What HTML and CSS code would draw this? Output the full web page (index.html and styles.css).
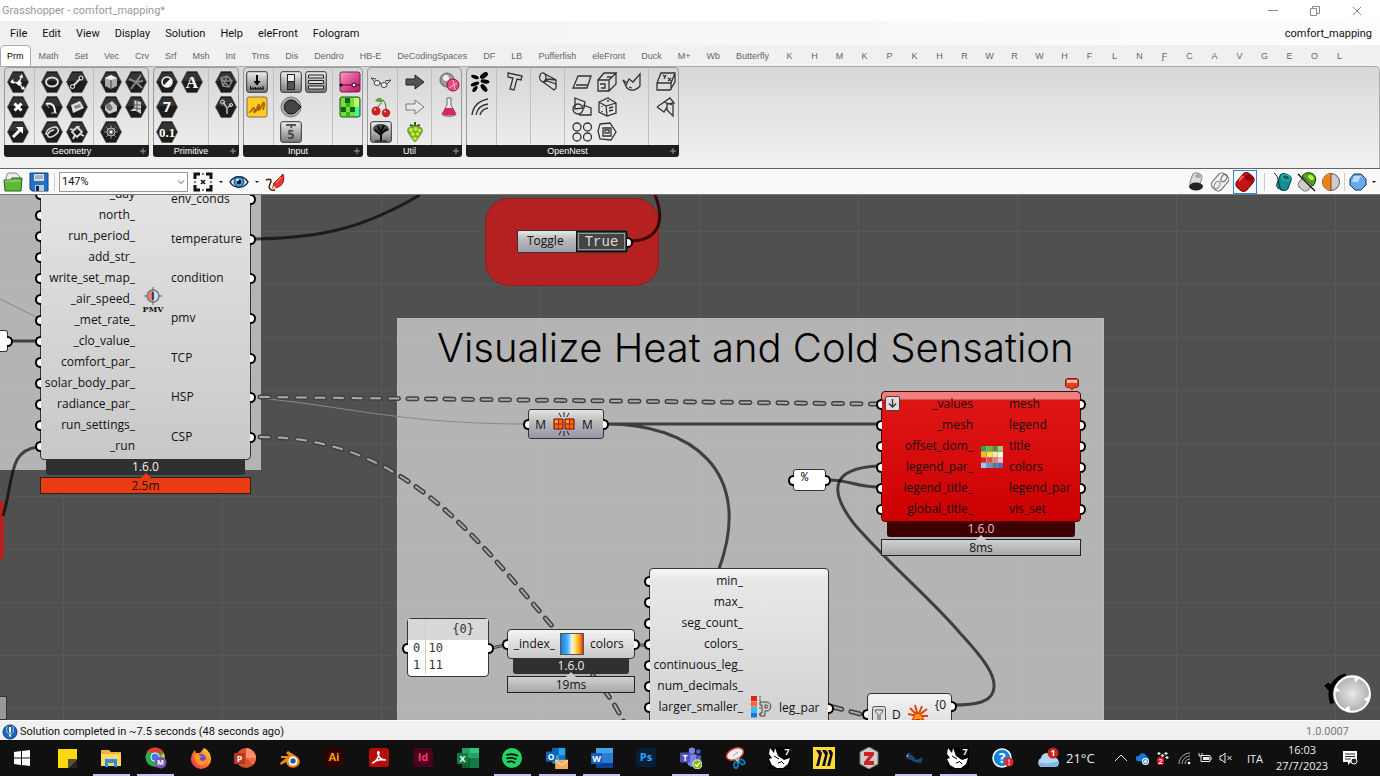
FILE: index.html
```html
<!DOCTYPE html>
<html lang="en">
<head>
  <meta charset="UTF-8">
  <title>Grasshopper - comfort_mapping*</title>
  <link rel="stylesheet" href="styles.css">
</head>
<body>

  <!-- shared shapes -->
  <svg class="defs" aria-hidden="true">
    <defs>
      <linearGradient id="steel" x1="0" y1="0" x2="0" y2="1"><stop offset="0" stop-color="#eee"/><stop offset="1" stop-color="#777"/></linearGradient>
      <linearGradient id="pink" x1="0" y1="0" x2="1" y2="1"><stop offset="0" stop-color="#ff9ac0"/><stop offset="1" stop-color="#c8006a"/></linearGradient>
      <linearGradient id="spectrum"><stop offset="0" stop-color="#1e78d8"/><stop offset=".3" stop-color="#3cb4f8"/><stop offset=".5" stop-color="#f4f4ee"/><stop offset=".68" stop-color="#ffd83c"/><stop offset=".85" stop-color="#ff8a1e"/><stop offset="1" stop-color="#d82414"/></linearGradient>
      <linearGradient id="fox" x1="1" y1="0" x2="0" y2="1"><stop offset="0" stop-color="#ffe226"/><stop offset=".5" stop-color="#ff7a28"/><stop offset="1" stop-color="#e8226a"/></linearGradient>
      <radialGradient id="knob"><stop offset="0" stop-color="#e8e8e8"/><stop offset="1" stop-color="#b0b0b0"/></radialGradient>
    </defs>
    <symbol id="hex" viewBox="0 0 22 22"><path d="M6 .5h10l5.500 10.500L16 21.500H6L.5 11z" fill="#1c1c1c" stroke="#555" stroke-width=".7"/><path d="M6.500 2h9l4.500 8H2z" fill="#444" opacity=".6"/></symbol>
    <symbol id="tile" viewBox="0 0 22 22"><rect x=".7" y=".7" width="20.600" height="20.600" rx="2" fill="url(#steel)" stroke="#333"/></symbol>
    <symbol id="plus" viewBox="0 0 8 8"><path d="M4 1v6M1 4h6" stroke="#999" fill="none"/></symbol>
    <symbol id="rhino" viewBox="0 0 22 22"><path d="M0 0h22v22H0z" fill="#000"/><path d="M1 1l4 5 1-5 3 8 6 4 6-2-2 6-5 4-6 0-5-3-3-6 3-1-3-4z" fill="#fff"/><path d="M5 9l5 3M12 14l3 3M9 16l3-1" stroke="#000"/></symbol>
  </svg>

  <div class="window">
    <header class="titlebar">
      <span>Grasshopper - comfort_mapping*</span>
      <div class="window-buttons">
        <button aria-label="Minimize"><svg width="10" height="10"><path d="M0 4.500h10" stroke="#888"/></svg></button>
        <button aria-label="Restore"><svg width="10" height="10"><path d="M.5 2.500h6v7h-6zM2.500 2.500v-2h7v7h-3" fill="none" stroke="#888"/></svg></button>
        <button aria-label="Close"><svg width="10" height="10"><path d="M1 1l8 8M9 1L1 9" stroke="#888"/></svg></button>
      </div>
    </header>

    <nav class="menu">
      <button>File</button><button>Edit</button><button>View</button><button>Display</button><button>Solution</button><button>Help</button><button>eleFront</button><button>Fologram</button>
      <span class="doc-name">comfort_mapping</span>
    </nav>

    <div class="tabs">
      <button class="active">Prm</button><button>Math</button><button>Set</button><button>Vec</button><button>Crv</button><button>Srf</button><button>Msh</button><button>Int</button><button>Trns</button><button>Dis</button><button>Dendro</button><button>HB-E</button><button>DeCodingSpaces</button><button>DF</button><button>LB</button><button>Pufferfish</button><button>eleFront</button><button>Duck</button><button>M+</button><button>Wb</button><button>Butterfly</button><button>K</button><button>H</button><button>M</button><button>K</button><button>P</button><button>K</button><button>H</button><button>R</button><button>W</button><button>R</button><button>W</button><button>H</button><button>F</button><button>L</button><button>N</button><button>Ƒ</button><button>C</button><button>A</button><button>V</button><button>G</button><button>E</button><button>O</button><button>L</button>
    </div>

    <div class="ribbon">
      <section class="group">
        <div class="sections">
          <div class="icons">
            <svg viewBox="0 0 22 22"><use href="#hex"/><path d="M12 12l3-8m-3 8l-8-1m8 1l4 6" stroke="#ddd" stroke-width="1.500" fill="none"/><path d="M12 6l3-3 1 4zM6 8l-3 3 4 2zM14 18l4 1-1-4zM9 12l3-3 3 3-3 3z" fill="#fff"/></svg>
            <svg viewBox="0 0 22 22"><use href="#hex"/><path d="M7.500 7.500l7 7m0-7l-7 7" stroke="#fff" stroke-width="3"/></svg>
            <svg viewBox="0 0 22 22"><use href="#hex"/><path d="M6 16l7-7" stroke="#fff" stroke-width="3"/><path d="M9 6h7v7z" fill="#fff"/></svg>
          </div>
          <div class="icons two">
            <svg viewBox="0 0 22 22"><use href="#hex"/><ellipse cx="11" cy="11" rx="6" ry="4.500" fill="none" stroke="#ddd" stroke-width="2"/></svg>
            <svg viewBox="0 0 22 22"><use href="#hex"/><path d="M7 15l8-8" stroke="#ddd" stroke-width="2"/><circle cx="6.500" cy="15.500" r="2" fill="#222" stroke="#fff"/><circle cx="15" cy="7" r="2" fill="#222" stroke="#fff"/></svg>
            <svg viewBox="0 0 22 22"><use href="#hex"/><path d="M5 8c6-2 9 2 9 9" stroke="#fff" stroke-width="2" fill="none"/><path d="M10 17h6M5 8l3 4" stroke="#bbb"/></svg>
            <svg viewBox="0 0 22 22"><use href="#hex"/><path d="M5 9l9-4 4 7-11 5z" fill="#ddd"/><path d="M8 10l6-2 1 3-6 2z" fill="#888"/></svg>
            <svg viewBox="0 0 22 22"><use href="#hex"/><path d="M5 14c0-7 10-10 12-6s-6 9-9 8-1-6 5-7" stroke="#ddd" stroke-width="1.500" fill="none"/></svg>
            <svg viewBox="0 0 22 22"><use href="#hex"/><path d="M11 6l5 5-5 5-5-5zM4 8l4 1M14 13l4 2M13 5l-1 3M9 14l-2 4" stroke="#ddd" stroke-width="1.800" fill="none"/></svg>
          </div>
          <div class="icons two">
            <svg viewBox="0 0 22 22"><use href="#hex"/><path d="M5 7l6-3 6 3v8l-6 3-6-3z" fill="#aaa"/><path d="M5 7l6 2 6-2-6-3z" fill="#eee"/><path d="M11 9v9" stroke="#444" fill="none"/></svg>
            <svg viewBox="0 0 22 22"><use href="#hex"/><path d="M11 11L4 8m7 3l5-7m-5 7l6 6m-6-6l-5 7m5-7l7-1" stroke="#888" stroke-width="2"/></svg>
            <svg viewBox="0 0 22 22"><use href="#hex"/><path d="M5 10l7-5 5 5v5l-8 3-4-4z" fill="#ccc"/><ellipse cx="9" cy="11" rx="3" ry="4" transform="rotate(-35 9 11)" fill="#777"/></svg>
            <svg viewBox="0 0 22 22"><use href="#hex"/><path d="M9 4l7 2v12l-5-3H5l4-3z" fill="#ccc"/><path d="M9 4v8l7 1M12 5v10M9 9h7" stroke="#555" fill="none"/></svg>
            <svg viewBox="0 0 22 22"><use href="#hex"/><path d="M11 4v14M4 11h14M6 6l10 10M16 6L6 16" stroke="#888"/><circle cx="11" cy="11" r="4" fill="none" stroke="#bbb"/><circle cx="11" cy="11" r="1.500" fill="#fff"/></svg>
          </div>
        </div>
        <h2>Geometry<svg><use href="#plus"/></svg></h2>
      </section>

      <section class="group">
        <div class="sections">
          <div class="icons two">
            <svg viewBox="0 0 22 22"><use href="#hex"/><circle cx="11" cy="11" r="5" fill="#222" stroke="#fff" stroke-width="1.500"/><path d="M14.500 7.500a5 5 0 0 1-7 7z" fill="#fff"/></svg>
            <svg viewBox="0 0 22 22"><use href="#hex"/><text x="11" y="17" class="glyph serif" font-size="17">A</text></svg>
            <svg viewBox="0 0 22 22"><use href="#hex"/><text x="11" y="16" class="glyph" font-size="14">7</text></svg>
            <i></i>
            <svg viewBox="0 0 22 22"><use href="#hex"/><text x="11" y="16" class="glyph serif" font-size="13">0.1</text></svg>
          </div>
          <div class="icons">
            <svg viewBox="0 0 22 22"><use href="#hex"/><path d="M6 7l6-2 5 5-3 6-6-1zM6 7l8 9M12 5l-4 10M17 10H7" stroke="#888" stroke-width="1.500" fill="none"/></svg>
            <svg viewBox="0 0 22 22"><use href="#hex"/><path d="M12 18v-6L8 6m4 6l4-3" stroke="#bbb" stroke-width="1.500" fill="none"/><circle cx="7.500" cy="6" r="2" fill="none" stroke="#ddd"/><circle cx="16" cy="9" r="1.500" fill="none" stroke="#ddd"/></svg>
          </div>
        </div>
        <h2>Primitive<svg><use href="#plus"/></svg></h2>
      </section>

      <section class="group">
        <div class="sections">
          <div class="icons">
            <svg viewBox="0 0 22 22"><use href="#tile"/><path d="M11 4v7" stroke="#000" stroke-width="2"/><path d="M7.500 10h7L11 14.500z"/><path d="M4 18h14M4.500 15v3m2.500-2v2m2.500-2v2m2.500-2v2m2.500-2v2m2.500-3v3" stroke="#000"/></svg>
            <svg viewBox="0 0 22 22"><rect x="1" y="1" width="20" height="20" rx="2" fill="#fc2" stroke="#865"/><path d="M3 16c3 1 3-5 5-4s-1 5 1 4 3-9 4-7-2 6 0 5 4-9 5-7-1 5-1 7" stroke="#a60" stroke-width="1.800" fill="none"/></svg>
          </div>
          <div class="icons two">
            <svg viewBox="0 0 22 22"><use href="#tile"/><path d="M7 3h8v16H7z" fill="#222"/><path d="M8 11h6v7H8z" fill="#555"/><path d="M8 4h6v6H8z" fill="#eee"/></svg>
            <svg viewBox="0 0 22 22"><use href="#tile"/><path d="M3.500 4h15v3h-15zm0 5.500h15v3h-15zm0 5.500h15v3h-15z" fill="#ddd" stroke="#222"/></svg>
            <svg viewBox="0 0 22 22"><circle cx="11" cy="11" r="10" fill="#aaa" stroke="#777"/><path d="M11 4a7 7 0 0 1 6 3l4 4-4 4a7 7 0 1 1-6-11z" fill="#444" stroke="#111"/></svg>
            <i></i>
            <svg viewBox="0 0 22 22"><use href="#tile"/><text x="11" y="18" class="glyph dark" font-size="12">5</text><path d="M6 4h10M12 3l-1 4" stroke="#555" stroke-width="2"/></svg>
          </div>
          <div class="icons">
            <svg viewBox="0 0 22 22"><rect x="1" y="1" width="20" height="20" rx="2" fill="url(#pink)" stroke="#534"/><path d="M1 14h20" stroke="#222"/><circle cx="2" cy="14" r="1.500"/><circle cx="15" cy="14" r="2" fill="#fff" stroke="#000"/></svg>
            <svg viewBox="0 0 22 22"><rect x="1" y="1" width="20" height="20" rx="2" fill="#7d3" stroke="#243"/><path d="M6 2h5v5H6zm-4 9h5v5H2zm9 0h5v5h-5z" fill="#161"/><path d="M15 2h5v9h-5z" fill="#bf6"/><path d="M16 11h4v9h-4z" fill="#3fa"/><path d="M7 7h4v4H7zm0 9h4v4H7z" fill="#2b2"/></svg>
          </div>
        </div>
        <h2>Input<svg><use href="#plus"/></svg></h2>
      </section>

      <section class="group">
        <div class="sections">
          <div class="icons">
            <svg viewBox="0 0 22 22"><ellipse cx="7" cy="12" rx="3" ry="2.500" fill="#eee" stroke="#444"/><ellipse cx="14" cy="14" rx="3" ry="2.500" fill="#eee" stroke="#444"/><path d="M10 12l2 1M5 11L1 7l5 1M17 13l4-4-6 1" stroke="#444" fill="none"/></svg>
            <svg viewBox="0 0 22 22"><path d="M13 4c-2 4-5 6-6 9m6-9c3 3 3 7 3 10" stroke="#363" fill="none"/><path d="M13 4C10 0 7 2 5 5c4 2 7 1 8-1z" fill="#5a3"/><circle cx="6" cy="15" r="4.500" fill="#c22"/><circle cx="16" cy="17" r="4.200" fill="#c22"/><circle cx="5" cy="13.500" r="1" fill="#fbb"/><circle cx="15" cy="15.500" r="1" fill="#fbb"/></svg>
            <svg viewBox="0 0 22 22"><use href="#tile"/><path d="M11 20v-9m0 3L5 9m6 4l6-5M11 12L8 5m3 6l3-7" stroke="#000" stroke-width="1.800"/><path d="M3 9c0-5 4-6 8-6s8 2 8 6c-2 3-3 0-5 2s-4-1-6 0-3 0-5-2z" opacity=".65"/><path d="M5 20h12" stroke="#111"/></svg>
          </div>
          <div class="icons">
            <svg viewBox="0 0 22 22"><path d="M2 8h9V4l9 7-9 7v-4H2z" fill="#555" stroke="#222"/></svg>
            <svg viewBox="0 0 22 22"><path d="M2 8h9V4l9 7-9 7v-4H2z" fill="#e8e8e8" stroke="#777"/></svg>
            <svg viewBox="0 0 22 22"><path d="M11 5V1M6 4l5 2 5-2" stroke="#352" stroke-width="2" fill="none"/><path d="M4 7c3-3 11-3 14 0s-2 8-4 11c-2 4-4 4-6 0-2-3-7-8-4-11z" fill="#7a2"/><circle cx="7" cy="9" r="2" fill="#be4"/><circle cx="11.500" cy="8" r="2" fill="#be4"/><circle cx="15.500" cy="9.500" r="1.700" fill="#be4"/><circle cx="9" cy="13" r="2" fill="#be4"/><circle cx="13.500" cy="13" r="1.800" fill="#be4"/><circle cx="11" cy="17.500" r="1.800" fill="#be4"/></svg>
          </div>
          <div class="icons">
            <svg viewBox="0 0 22 22"><circle cx="9" cy="9" r="7" fill="#999" stroke="#666"/><circle cx="8" cy="7" r="3" fill="#eee"/><circle cx="15" cy="14" r="6" fill="#e1467c" stroke="#913"/><path d="M11 17l8-5M15 9l2 10" stroke="#fbd"/></svg>
            <svg viewBox="0 0 22 22"><path d="M9 2h4v7l5 9c0 3-14 3-14 0l5-9z" fill="#eee" stroke="#666"/><path d="M7.500 12h7l3.500 6c-2 2-12 2-14 0z" fill="#d8256a"/></svg>
          </div>
        </div>
        <h2>Util<svg><use href="#plus"/></svg></h2>
      </section>

      <section class="group">
        <div class="sections">
          <div class="icons">
            <svg viewBox="0 0 22 22"><ellipse cx="15" cy="4.500" rx="4.500" ry="2.500" transform="rotate(-35 15 4.500)"/><ellipse cx="6" cy="6" rx="4" ry="1.800" transform="rotate(20 6 6)"/><ellipse cx="6" cy="13" rx="4.500" ry="1.800" transform="rotate(-20 6 13)"/><ellipse cx="16" cy="10.500" rx="4.500" ry="2" transform="rotate(10 16 10.500)"/><ellipse cx="15" cy="17" rx="4.500" ry="2.300" transform="rotate(50 15 17)"/><ellipse cx="6" cy="18" rx="3.500" ry="1.800" transform="rotate(-50 6 18)"/></svg>
            <svg viewBox="0 0 22 22" class="line"><path d="M3 19C4 11 9 5 19 3M7 19c1-6 5-10 12-11M11 19c1-4 3-6 8-7"/></svg>
          </div>
          <div class="icons">
            <svg viewBox="0 0 22 22" class="line"><path d="M5 2l14 3-1 4-4-1-3 11-4-1 3-11-5-1z"/></svg>
          </div>
          <div class="icons">
            <svg viewBox="0 0 22 22" class="line"><path d="M3 4c-1 3 0 6 3 7l11 8 2-2v-8L8 3C6 1 4 2 3 4zM6 11c3-1 4-5 2-8M6 11l4-1 9 3M10 10v-2l9 1"/></svg>
          </div>
          <div class="icons three">
            <svg viewBox="0 0 22 22" class="line"><path d="M7 5h13l-4 12H2zM5 14h12"/></svg>
            <svg viewBox="0 0 22 22" class="line"><path d="M2 9h11v11H2zM2 9l6-7h12l-7 7M20 2v11l-7 7M4 13h5v4H5M11 6l5 0"/></svg>
            <svg viewBox="0 0 22 22" class="line"><path d="M2 9l4 3 2-4 4 3 7-8v12c-3 4-9 6-13 2zM8 16l3 1M5 14l1-1"/></svg>
            <svg viewBox="0 0 22 22" class="line"><path d="M4 2l10 4-1 6-9 1zM12 9l8 3v7H8"/><circle cx="7" cy="13" r="5"/></svg>
            <svg viewBox="0 0 22 22" class="line"><path d="M3 6l9-4 8 5v10l-9 3-8-4zM3 6l7 4 10-3M10 10l1 10M13 12l4-1m-4 4l4-1M6 10v1m0 4v1m5-11h2"/></svg>
            <i></i>
            <svg viewBox="0 0 22 22" class="line"><circle cx="6" cy="6" r="4"/><circle cx="16.500" cy="6" r="4"/><circle cx="6" cy="16" r="4"/><circle cx="16.500" cy="16" r="4"/></svg>
            <svg viewBox="0 0 22 22" class="line"><path d="M4 3l10-1 6 9-5 8-11-1-2-8zM7 7h8v8H7zM9 13v-4h4v3h-3"/></svg>
          </div>
          <div class="icons">
            <svg viewBox="0 0 22 22" class="line"><path d="M6 2h14l-4 10H2zM2 12v7h13l5-8V3M16 12v7"/><path d="M8 4l2 2m1-2l-2 4m4-1l3 3m0-3l-3 3"/></svg>
            <svg viewBox="0 0 22 22" class="line"><path d="M2 11l13-9 4 5-7 1v6l6 6V8M2 11l7 5 3-5M9 6l8 3"/></svg>
          </div>
        </div>
        <h2>OpenNest<svg><use href="#plus"/></svg></h2>
      </section>
    </div>

    <div class="toolbar">
      <button aria-label="Open"><svg viewBox="0 0 20 20"><path d="M5 1h8l4 4v8H3V5z" fill="#eee" stroke="#888"/><path d="M1 8l7 0 1-2h10l-1 13H2z" fill="#5fb83a" stroke="#286318"/><path d="M2 9h15" stroke="#a6e286"/></svg></button>
      <button aria-label="Save"><svg viewBox="0 0 20 20"><path d="M1 1h18v18H3l-2-2z" fill="#2472c8" stroke="#113c7c"/><path d="M5 2h10v7H5z" fill="#d8dde4"/><path d="M6 4h8M6 6h8" stroke="#789"/><path d="M6 13h9v6H6z" fill="#bcc"/><path d="M7 14h3v5H7z" fill="#124"/></svg></button>
      <span class="sep"></span>
      <div class="zoom">
        <select aria-label="Zoom"><option>147%</option></select>
        <svg viewBox="0 0 8 8"><path d="M1 2.500L4 5.500l3-3" fill="none" stroke="#555"/></svg>
      </div>
      <button aria-label="Zoom extents"><svg viewBox="0 0 20 20"><path d="M2 7V2h5m6 0h5v5m0 6v5h-5m-6 0H2v-5" fill="none" stroke="#111" stroke-width="3"/><path d="M8 8l4 4m0-4l-4 4" stroke="#111" stroke-width="1.500"/><path d="M9 2h2M9 18h2M2 9v2m16-2v2" stroke="#777" stroke-width="2"/></svg></button>
      <span class="caret"></span>
      <button aria-label="Preview"><svg viewBox="0 0 20 20"><path d="M1 10c4-7 14-7 18 0-4 7-14 7-18 0z" fill="#eef6ff" stroke="#124" stroke-width="1.500"/><circle cx="10" cy="10" r="5" fill="#3f9ae0" stroke="#146"/><circle cx="10" cy="10" r="2.200" fill="#012"/><circle cx="8.500" cy="8" r="1.200" fill="#fff"/></svg></button>
      <span class="caret"></span>
      <button aria-label="Sketch"><svg viewBox="0 0 20 20"><path d="M1 8c5-2 6 0 4 4s0 7 5 6" fill="none" stroke="#421" stroke-width="1.500"/><path d="M9 11L18 2c2 5 0 12-5 13l-6 3z" fill="#e33" stroke="#821"/><path d="M7 18l1-4 4 2z" fill="#fc9"/><path d="M11 11l5-6" stroke="#fa9"/></svg></button>

      <div class="display-modes">
        <button aria-label="No preview"><svg viewBox="0 0 20 20"><rect x="5" y="1" width="10" height="14" rx="4" transform="rotate(20 10 8)" fill="#ddd" stroke="#888"/><ellipse cx="12" cy="4" rx="3" ry="2" fill="#aaa"/><ellipse cx="10" cy="14.500" rx="7" ry="4" fill="#222"/></svg></button>
        <button aria-label="Wireframe preview"><svg viewBox="0 0 20 20"><rect x="4" y="1" width="12" height="18" rx="4" transform="rotate(40 10 10)" fill="#eee" stroke="#666"/><ellipse cx="14" cy="6" rx="2.500" ry="4" transform="rotate(30 14 6)" fill="none" stroke="#666"/><ellipse cx="7" cy="13" rx="2.500" ry="4" transform="rotate(30 7 13)" fill="none" stroke="#888"/></svg></button>
        <button class="selected" aria-label="Shaded preview"><svg viewBox="0 0 20 20"><rect x="3.500" y="1" width="13" height="18" rx="4" transform="rotate(40 10 10)" fill="#c41414" stroke="#700"/><ellipse cx="14" cy="6" rx="4" ry="3" transform="rotate(40 14 6)" fill="#8c0000"/><path d="M4 9l4-5" stroke="#f66" stroke-width="2"/></svg></button>
        <span class="sep"></span>
        <button aria-label="Selected only"><svg viewBox="0 0 20 20"><rect x="5" y="2" width="12" height="16" rx="4" transform="rotate(20 11 10)" fill="#128f92" stroke="#044"/><ellipse cx="13" cy="5.500" rx="4" ry="2.500" transform="rotate(20 13 5.500)" fill="#06666a" stroke="#4cc"/><path d="M1 1c6 4 3 11 8 18" stroke="#222" fill="none"/></svg></button>
        <button aria-label="Document preview"><svg viewBox="0 0 20 20"><rect x="4" y="1" width="12" height="18" rx="4" transform="rotate(40 10 10)" fill="#ccc" stroke="#777"/><path d="M5 4c3-4 8-4 11-2s4 6 0 12z" fill="#5a1" stroke="#240"/><ellipse cx="14" cy="5.500" rx="3" ry="2" transform="rotate(40 14 5.500)" fill="#bf6"/><path d="M1 2l17 17" stroke="#111" stroke-width="1.500"/></svg></button>
        <button aria-label="Preview quality"><svg viewBox="0 0 20 20"><circle cx="10" cy="10" r="8.500" fill="#ccc" stroke="#555"/><path d="M10 1.500a8.500 8.500 0 0 0 0 17z" fill="#e88418"/><path d="M10 1v18" stroke="#842"/></svg></button>
        <span class="sep"></span>
        <button aria-label="Gem"><svg viewBox="0 0 20 20"><path d="M6 2h7l5 5v6l-5 5-6 0-5-5v-6z" fill="#6aa9ec" stroke="#135"/><path d="M6 4l7 0-3 6-6 0z" fill="#b9dbff"/></svg></button>
        <span class="caret"></span>
      </div>
    </div>

    <main class="canvas">
      <div class="area area-left"></div>
      <div class="area area-red"></div>
      <div class="area area-main"></div>
      <div class="area area-edge"></div>

      <svg class="wires">
        <g transform="translate(0 -195)">
          <path class="thin" d="M0 299L38 318M257 398C340 405 400 424 526 424"/>
          <path class="wire" d="M8 341H38M38 447C8 450 14 480 3 516M255 239C330 238 370 224 420 195"/>
          <path class="wire maroon" d="M630 241C655 241 667 225 655 195"/>
          <path class="wire" d="M607 424H879M607 424C690 424 755 470 719 569M829 480C850 480 855 487 879 487"/>
          <path class="wire" d="M879 466C829 468 829 492 855 525C890 565 930 598 960 633C985 660 995 675 994 687C993 703 975 705 953 705"/>
          <path class="tree" d="M260 397L878 404M260 437C400 437 470 530 552 626S610 705 630 730M833 707L868 716"/>
          <path class="tree-core" d="M260 397L878 404M260 437C400 437 470 530 552 626S610 705 630 730M833 707L868 716"/>
          <path class="wire" d="M492 648L505 645M637 645H647"/>
          <path class="list-core" d="M492 648L505 645M637 645H647"/>
        </g>
      </svg>

      <h1>Visualize Heat and Cold Sensation</h1>

      <div class="stub stub-value port-out"></div>
      <div class="stub stub-bottom"></div>

      <article class="node pmv">
        <div class="body">
          <ul class="inputs"><li>_day</li><li>north_</li><li>run_period_</li><li>add_str_</li><li>write_set_map_</li><li>_air_speed_</li><li>_met_rate_</li><li>_clo_value_</li><li>comfort_par_</li><li>solar_body_par_</li><li>radiance_par_</li><li>run_settings_</li><li>_run</li></ul>
          <svg class="icon tall" viewBox="0 0 24 26"><circle cx="12" cy="9" r="6" fill="#cde" stroke="#777" stroke-width="1.500"/><path d="M12 4a5 5 0 0 0 0 10z" fill="#e8776a"/><path d="M12 0v4m0 10v4M3 9h3m12 0h3" stroke="#666"/><path d="M12 5v8" stroke="#345" stroke-width="2"/><text x="12" y="25" font-size="8" class="glyph black mono">PMV</text></svg>
          <ul class="outputs"><li>env_conds</li><li>temperature</li><li>condition</li><li>pmv</li><li>TCP</li><li>HSP</li><li>CSP</li></ul>
        </div>
        <div class="version">1.6.0</div>
        <div class="time slow">2.5m</div>
      </article>

      <div class="toggle port-out">
        <span id="toggle-label">Toggle</span>
        <button aria-labelledby="toggle-label">True</button>
      </div>

      <article class="mesh port-in port-out">
        <span>M</span>
        <svg width="22" height="24" viewBox="0 0 22 24"><path d="M11 0v5m0 14v5M6 1l2 4m8-4l-2 4M6 23l2-4m8 4l-2-4" stroke="#222"/><path d="M1 7h9v10H1zm11 0h9v10h-9z" fill="#f60" stroke="#700"/><path d="M5.500 7v10M1 12h9m6.500-5v10M12 12h9" stroke="#a21"/><path d="M2 8h3v3H2zm11 0h3v3h-3z" fill="#fa2"/></svg>
        <span>M</span>
      </article>

      <div class="percent port-in port-out">%</div>

      <article class="node error">
        <svg class="balloon" viewBox="0 0 14 12"><path d="M2 .5h10l1.500 1.500v6L12 9.500H9L7 12 5 9.500H2L.5 8V2z" fill="#f43a18" stroke="#722"/><path d="M2 2h10v3H2z" fill="#fba"/></svg>
        <div class="body">
          <button class="expand" aria-label="Expand"><svg viewBox="0 0 10 10"><path d="M5 0v9M1 5l4 4 4-4" fill="none" stroke="#333" stroke-width="1.500"/></svg></button>
          <ul class="inputs"><li>_values</li><li>_mesh</li><li>offset_dom_</li><li>legend_par_</li><li>legend_title_</li><li>global_title_</li></ul>
          <svg class="icon" viewBox="0 0 22 22"><path d="M0 0h22v22H0z" fill="#a98"/><path d="M0 0h5v5H0z" fill="#2a4"/><path d="M6 0h5v5H6z" fill="#6b3"/><path d="M11.500 0h5v5h-5z" fill="#584"/><path d="M17 0h5v5h-5z" fill="#9c7"/><path d="M0 6h5v5H0z" fill="#fb1"/><path d="M6 6h5v5H6z" fill="#fd5"/><path d="M11.500 6h5v5h-5z" fill="#fe9"/><path d="M17 6h5v5h-5z" fill="#ffd"/><path d="M0 11.500h5v5H0z" fill="#d22"/><path d="M6 11.500h5v5H6z" fill="#e44"/><path d="M11.500 11.500h5v5h-5z" fill="#e77"/><path d="M17 11.500h5v5h-5z" fill="#fbb"/><path d="M0 17h5v5H0z" fill="#9ce"/><path d="M6 17h5v5H6z" fill="#69c"/><path d="M11.500 17h5v5h-5z" fill="#579"/><path d="M17 17h5v5h-5z" fill="#56b"/></svg>
          <ul class="outputs"><li>mesh</li><li>legend</li><li>title</li><li>colors</li><li>legend_par</li><li>vis_set</li></ul>
        </div>
        <div class="version">1.6.0</div>
        <div class="time">8ms</div>
      </article>

      <div class="panel port-in port-out">
        <table>
          <thead><tr><th></th><th>{0}</th></tr></thead>
          <tbody><tr><td>0</td><td>10</td></tr><tr><td>1</td><td>11</td></tr></tbody>
        </table>
      </div>

      <article class="node palette">
        <div class="body">
          <ul class="inputs"><li>_index_</li></ul>
          <svg class="icon" viewBox="0 0 24 22"><rect x=".5" y=".5" width="23" height="21" fill="url(#spectrum)" stroke="#555"/></svg>
          <ul class="outputs"><li>colors</li></ul>
        </div>
        <div class="version">1.6.0</div>
        <div class="time">19ms</div>
      </article>

      <article class="node legend">
        <div class="body">
          <ul class="inputs"><li>min_</li><li>max_</li><li>seg_count_</li><li>colors_</li><li>continuous_leg_</li><li>num_decimals_</li><li>larger_smaller_</li></ul>
          <svg class="icon" viewBox="0 0 22 22"><path d="M0 0h6v5H0z" fill="#d22"/><path d="M0 5.500h6v5H0z" fill="#f62"/><path d="M0 11h6v5H0z" fill="#3bf"/><path d="M0 16.500h6v5H0z" fill="#17d"/><path d="M8 1h2M8 4h2M8 12h2M8 18h2M9 6h7c5 0 5 9 0 9h-2v5H9v-3h2V9H9zm5 3v3h2c1 0 1-3 0-3z" fill="#ccc" stroke="#444"/></svg>
          <ul class="outputs"><li>leg_par</li></ul>
        </div>
      </article>

      <article class="explode port-in port-out">
        <svg width="14" height="16" viewBox="0 0 14 16"><rect x=".5" y=".5" width="13" height="17" rx="2" fill="#ddd" stroke="#555"/><path d="M3 4c1 4 3 3 3 5v5m5-10c-1 4-3 3-3 5v5M3 4h8" fill="none" stroke="#555"/></svg>
        <span>D</span>
        <svg width="22" height="20" viewBox="0 0 22 20"><path d="M11 12L1 10m10 2L3 4m8 8L8 1m3 11l4-10m-4 10l9-7m-9 7l10 0m-10 0l8 6m-8-6L3 18" stroke="#d41" stroke-width="2"/><path d="M6 16c0-9 10-9 10 0z" fill="#f90" stroke="#c31"/><path d="M9 15h4l-2 4z" fill="#c12"/></svg>
        <span class="branch">{0</span>
      </article>

      <svg class="compass" viewBox="0 0 48 48"><path d="M9 34C4 22 10 10 22 7" stroke="#000" stroke-width="4" fill="none"/><path d="M1 17l4-3 5 3-4 5z"/><circle cx="28" cy="25" r="17" fill="url(#knob)" stroke="#fff" stroke-width="2"/><path d="M30 9l5 1-4 4zM44 27l0 6-5-3zM26 41l-6-1 5-4zM12 23l0-5 5 4z" fill="#fff"/></svg>
    </main>

    <footer class="status">
      <svg viewBox="0 0 16 16"><circle cx="8" cy="8" r="7" fill="#2068b4" stroke="#123c78"/><path d="M5 2c-1 5 0 8 3 8s4-3 3-8" fill="none" stroke="#9cf"/><path d="M8 3v5.500M8 10.500v2" stroke="#fff" stroke-width="2"/></svg>
      <span>Solution completed in ~7.5 seconds (48 seconds ago)</span>
      <span class="build">1.0.0007</span>
    </footer>
  </div>

  <div class="taskbar">
    <div class="apps">
      <button aria-label="Start"><svg viewBox="0 0 22 22"><path d="M3 5l7-1v6.500H3zm8-1l8-1v7.500h-8zM3 11.500h7V18l-7-1zm8 0h8V19l-8-1z" fill="#fff"/></svg></button>
      <button aria-label="Sticky Notes"><svg viewBox="0 0 22 22"><path d="M2 2h19v19H2z" fill="#fcd90a"/><path d="M21 12v9h-9z" fill="#222"/><path d="M12 12h9l-9 9z" fill="#565136"/></svg></button>
      <button class="open" aria-label="Explorer"><svg viewBox="0 0 22 22"><path d="M1 3h8l2 2h10v14H1z" fill="#f0b43c"/><path d="M1 7h20v12H1z" fill="#ffd965"/><path d="M5 12h12v8h-3v-4H8v4H5z" fill="#2f8ee2"/></svg></button>
      <button class="open" aria-label="Chrome"><svg viewBox="0 0 24 24"><circle cx="11" cy="11" r="10.500" fill="#2da94f"/><path d="M2 5.500a10.500 10.500 0 0 1 18.500 1H11z" fill="#e33b2e"/><path d="M20.500 6.500A10.500 10.500 0 0 1 11 21.500l4-9z" fill="#fbc116"/><circle cx="11" cy="11" r="5" fill="#fff"/><circle cx="11" cy="11" r="4" fill="#3d7be8"/><circle cx="17" cy="17" r="6.500" fill="#7755b8"/><text x="17" y="20" font-size="8" class="glyph">M</text></svg></button>
      <button aria-label="Firefox"><svg viewBox="0 0 22 22"><path d="M14 1c4 2 7 6 7 11a10 10 0 0 1-20 0C1 8 3 5 5 3l1 3h4z" fill="url(#fox)"/><circle cx="11" cy="12" r="5" fill="#7a45d8"/><path d="M5 8c3-1 5 0 7 2-4 0-2 4 1 4 2 0 4-2 3-4 2 6-3 9-6 8-4-1-6-6-5-10z" fill="#ff9a22"/></svg></button>
      <button aria-label="PowerPoint"><svg viewBox="0 0 22 22"><circle cx="12" cy="11" r="10" fill="#d35230"/><path d="M12 1a10 10 0 0 1 10 10H12z" fill="#ff8f6b"/><path d="M12 11h10a10 10 0 0 1-3 7z" fill="#ed6c47"/><rect y="6" width="11" height="11" rx="1" fill="#b7381c"/><text x="5.500" y="15" font-size="9" class="glyph">P</text></svg></button>
      <button aria-label="Blender"><svg viewBox="0 0 22 22"><path d="M2 9h8L7 6l2-2 8 5c5 3 5 9 0 11s-9-1-10-5l-5 3-1-2 6-5H2z" fill="#f0851b"/><circle cx="14" cy="14" r="4.500" fill="#fff"/><circle cx="14" cy="14" r="2.700" fill="#235a9a"/></svg></button>
      <button aria-label="Illustrator"><svg viewBox="0 0 22 22"><rect x="1" y="1" width="20" height="19" rx="3" fill="#2f0400"/><text x="11" y="14" font-size="11" class="glyph orange">Ai</text></svg></button>
      <button aria-label="Acrobat"><svg viewBox="0 0 22 22"><rect x="1" y="1" width="20" height="19" rx="3" fill="#b60c0c"/><path d="M4 16c4-1 7-6 7-10 0-2-2-2-1 1 1 4 4 6 8 6M5 16c3-3 7-4 12-3" stroke="#fff" stroke-width="1.500" fill="none"/></svg></button>
      <button aria-label="InDesign"><svg viewBox="0 0 22 22"><rect x="1" y="1" width="20" height="19" rx="3" fill="#49021f"/><text x="11" y="14" font-size="11" class="glyph magenta">Id</text></svg></button>
      <button aria-label="Excel"><svg viewBox="0 0 22 22"><path d="M5 1h17v20H5z" fill="#21a366"/><path d="M5 11h8v10H5z" fill="#185c37"/><path d="M13 1h9v5h-9z" fill="#33c481"/><path d="M13 11h9v10h-9z" fill="#107c41"/><rect y="6" width="11" height="11" rx="1" fill="#107c41"/><text x="5.500" y="15" font-size="9" class="glyph">X</text></svg></button>
      <button class="open" aria-label="Spotify"><svg viewBox="0 0 22 22"><circle cx="11" cy="11" r="10" fill="#1ed760"/><path d="M5 8c4-1 9-1 12 1M5.500 11.500c4-1 7-1 10 1M6 15c3-1 6-1 8 1" stroke="#111" stroke-width="1.800" fill="none"/></svg></button>
      <button class="open" aria-label="Outlook"><svg viewBox="0 0 24 24"><path d="M7 1h14v17H7z" fill="#28a8ea"/><path d="M7 1h7v8H7z" fill="#0a64b8"/><path d="M14 9h7v8h-7z" fill="#1172c4"/><rect x="0" y="5" width="11" height="11" rx="1" fill="#0a64b8"/><text x="5.500" y="14" font-size="9" class="glyph">O</text><path d="M10 14h14v10H10z" fill="#f3ab5e"/><path d="M10 14l7 6 7-6" fill="none" stroke="#fff"/></svg></button>
      <button class="open" aria-label="Word"><svg viewBox="0 0 22 22"><path d="M5 1h17v20H5z" fill="#2b7cd3"/><path d="M5 1h17v5H5z" fill="#41a5ee"/><path d="M5 16h17v5H5z" fill="#103f91"/><rect y="6" width="11" height="11" rx="1" fill="#185abd"/><text x="5.500" y="15" font-size="9" class="glyph">W</text></svg></button>
      <button aria-label="Photoshop"><svg viewBox="0 0 22 22"><rect x="1" y="1" width="20" height="19" rx="3" fill="#061e36"/><text x="11" y="14" font-size="11" class="glyph sky">Ps</text></svg></button>
      <button class="open" aria-label="Teams"><svg viewBox="0 0 24 24"><circle cx="13" cy="4" r="3.500" fill="#7b83eb"/><circle cx="20" cy="5" r="2.500" fill="#5059c9"/><path d="M8 8h10v9c-2 6-9 6-10 0z" fill="#7b83eb"/><path d="M18 9h5v7c-1 3-4 3-5 1z" fill="#5059c9"/><rect y="6" width="11" height="11" rx="1" fill="#4b53bc"/><text x="5.500" y="15" font-size="9" class="glyph">T</text><circle cx="19" cy="19" r="5" fill="#7fba00" stroke="#fff"/><path d="M16.500 19l2 2 3-4" stroke="#fff" stroke-width="1.500" fill="none"/></svg></button>
      <button aria-label="Snipping Tool"><svg viewBox="0 0 22 22"><ellipse cx="11" cy="7" rx="9" ry="5.500" transform="rotate(-25 11 7)" fill="#eee" stroke="#c33" stroke-width="1.500"/><path d="M9 9l5-4" stroke="#999"/><path d="M11 11l4 5m0-5l-2 5" stroke="#ccc" stroke-width="1.500"/><ellipse cx="12" cy="18" rx="2" ry="3" fill="none" stroke="#17b" stroke-width="1.800"/><ellipse cx="18" cy="15" rx="2" ry="3" transform="rotate(-50 18 15)" fill="none" stroke="#17b" stroke-width="1.800"/></svg></button>
      <button aria-label="Rhino 7"><svg viewBox="0 0 22 22"><use href="#rhino"/><text x="18" y="8" font-size="9" class="glyph">7</text></svg></button>
      <button aria-label="Miro"><svg viewBox="0 0 22 22"><path d="M0 0h22v22H0z" fill="#fd3"/><path d="M3 3h4l2 3-3 13H3l3-11zM9 3h4l2 3-3 13H9l3-11zM15 3h3l2 3-3 13h-3l3-11z" fill="#0b0838"/></svg></button>
      <button aria-label="Zotero"><svg viewBox="0 0 22 22"><path d="M11 0l9 5v12l-9 5-9-5V5z" fill="#ccc" stroke="#777"/><path d="M6 5h10v3l-5 6h5v4H6v-3l5-6H6z" fill="#c22"/></svg></button>
      <button class="open" aria-label="Grasshopper"><svg viewBox="0 0 22 22"><path d="M2 11l5-1-2-5 6 5 2 3 3-1 4-2-2 6-6-1-4-2z" fill="#1c4c7c"/><path d="M3 10l3 0-1-4z" fill="#68a8d8"/></svg></button>
      <button class="open" aria-label="Rhino 7, second window"><svg viewBox="0 0 22 22"><use href="#rhino"/><text x="18" y="8" font-size="9" class="glyph">7</text></svg></button>
      <button aria-label="Get Help"><svg viewBox="0 0 22 22"><circle cx="10" cy="11" r="9" fill="#1583d8" stroke="#fff" stroke-width="1.500"/><text x="10" y="16" font-size="14" class="glyph">?</text><circle cx="17" cy="15" r="4.500" fill="#e22"/><path d="M17 12.500v3m0 1v1.500" stroke="#fff" stroke-width="1.300"/></svg></button>
    </div>
    <div class="tray">
      <button class="weather"><svg viewBox="0 0 24 22"><path d="M5 20a5 5 0 0 1 0-9c1-6 10-7 12-1 7 0 8 10 2 10z" fill="#b4d4f4"/><path d="M5 20a5 5 0 0 1-3-5c5 2 15 2 20-1 1 4-1 6-3 6z" fill="#88b4e4"/><circle cx="17" cy="6" r="5.500" fill="#c4281c"/><text x="17" y="9" font-size="8" class="glyph">1</text></svg>21°C</button>
      <div class="tray-icons">
        <svg viewBox="0 0 14 14"><path d="M1 10l6-6 6 6" stroke="#eee" fill="none"/></svg>
        <svg viewBox="0 0 14 14"><path d="M2 10c-3-3 0-6 2-5 1-4 7-3 7 0 4 1 3 6 0 6z" fill="#1678d0"/><circle cx="10.500" cy="10.500" r="3.500" fill="#fff"/><circle cx="10.500" cy="10.500" r="2" fill="none" stroke="#1678d0"/></svg>
        <svg viewBox="0 0 14 14"><path d="M3 1l2 1.500L3 4 1 2.500zm7 0l2 1.500L10 4 8 2.500zM6.500 3l2 1.500-2 1.500-2-1.500zM11 5l2 1.500L11 8 9 6.500z" fill="#eee"/><rect x="1" y="6" width="7" height="8" rx="2" fill="#d12"/><text x="4.500" y="13" font-size="7" class="glyph">2</text></svg>
        <svg viewBox="0 0 14 14"><path d="M2 13C2 7 7 2 13 2M5 13c0-4 4-8 8-8M8 13c0-3 2-5 5-5" stroke="#aaa" fill="none"/><circle cx="12" cy="12" r="1.300" fill="#fff"/></svg>
        <svg viewBox="0 0 14 14"><path d="M3 4.500h9v6H3zM13 6v3M1 2v3h3V2" stroke="#eee" fill="none"/><path d="M5 6h6v3H5z" fill="#eee"/></svg>
        <svg viewBox="0 0 14 14"><path d="M1 5h2l3-3v10L3 9H1zM8.500 5l4 4m0-4l-4 4" stroke="#eee" fill="none"/></svg>
      </div>
      <span class="lang">ITA</span>
      <div class="clock"><time>16:03</time><span>27/7/2023</span></div>
      <button class="notes" aria-label="Notifications"><svg viewBox="0 0 16 16"><path d="M1 1h14v11H9l-3 3v-3H1z" fill="#fff"/><path d="M3 4h10M3 6.500h10M3 9h6" stroke="#222"/><circle cx="12" cy="11" r="3" fill="#222" stroke="#fff"/></svg></button>
    </div>
  </div>

</body>
</html>
```

FILE: styles.css
```css
*,
*::before,
*::after {
  box-sizing: border-box;
}

body {
  margin: 0;
  height: 100vh;
  display: flex;
  flex-direction: column;
  overflow: hidden;
  font-family: Roboto, "Open Sans", sans-serif;
  font-size: 11px;
  color: #111;
  background: #f0f0f0;
}

button {
  padding: 0;
  border: none;
  background: none;
  color: inherit;
  font: inherit;
}

svg {
  display: block;
  flex-shrink: 0;
}

ul {
  margin: 0;
  padding: 0;
  list-style: none;
}

.defs {
  position: absolute;
  width: 0;
  height: 0;
}

.glyph {
  font-family: "Open Sans", sans-serif;
  font-weight: bold;
  text-anchor: middle;
  fill: #fff;
}

.glyph.serif { font-family: "Liberation Serif", serif; }
.glyph.mono { font-family: "DejaVu Serif", serif; }
.glyph.dark { fill: #444; }
.glyph.black { fill: #111; }
.glyph.orange { fill: #ff9a00; }
.glyph.magenta { fill: #ff3366; }
.glyph.sky { fill: #31a8ff; }

.window {
  flex: 1;
  min-height: 0;
  display: flex;
  flex-direction: column;
}

/* title, menu, tabs */
.titlebar {
  height: 21px;
  display: flex;
  align-items: center;
  justify-content: space-between;
  padding: 0 2px;
  background: #fff;
  color: #999;
}

.window-buttons {
  display: flex;
  gap: 32px;
  padding-right: 16px;
}

.menu {
  height: 24px;
  display: flex;
  align-items: center;
  gap: 15px;
  padding: 0 8px 0 10px;
  background: linear-gradient(90deg, #f0f0f0, #fdfdfd);
}

.doc-name {
  margin-left: auto;
}

.tabs {
  height: 21px;
  display: flex;
  background: #f0f0f0;
  font-family: "Liberation Sans", Arial, sans-serif;
  font-size: 9px;
  color: #666;
}

.tabs button {
  min-width: 25px;
  padding: 1px 8px 0;
}

.tabs .active {
  padding: 0 6px;
  border: 1px solid #aaa;
  border-bottom: none;
  border-radius: 5px 5px 0 0;
  background: #fff;
  color: #000;
}

/* ribbon */
.ribbon {
  height: 102px;
  display: flex;
  align-items: flex-start;
  gap: 4px;
  padding: 0 4px;
  border-top: 1px solid #aaa;
  border-right: 1px solid #aaa;
  border-radius: 0 5px 0 0;
  background: linear-gradient(#d8d8d8, #f2f2f2);
}

.group {
  height: 90px;
  border: 1px solid #999;
  border-radius: 4px;
  background: linear-gradient(#d6d6d6, #f0f0f0);
}

.sections {
  display: flex;
  height: 77px;
}

.icons {
  display: grid;
  grid-template-columns: 25px;
  grid-auto-rows: 25px;
  align-content: start;
  place-items: center;
  padding: 1px 4px 1px 0;
}

.icons.two { grid-template-columns: 25px 25px; }
.icons.three { grid-template-columns: 25px 25px 25px; }

.icons + .icons {
  padding-left: 4px;
  border-left: 1px solid #c0c0c0;
}

.icons:last-child {
  padding-right: 0;
}

.icons svg {
  width: 22px;
  height: 22px;
}

.line {
  fill: none;
  stroke: #333;
  stroke-width: 1.3;
}

.group h2 {
  position: relative;
  margin: 0 -1px;
  height: 12px;
  border-radius: 0 0 3px 3px;
  background: #1e1e1e;
  color: #fff;
  font: 9px/12px "Liberation Sans", Arial, sans-serif;
  text-align: center;
  padding-right: 10px;
}

.group h2 svg {
  position: absolute;
  right: 2px;
  top: 2px;
  width: 8px;
  height: 8px;
}

/* canvas toolbar */
.toolbar {
  height: 27px;
  display: flex;
  align-items: center;
  gap: 4px;
  padding: 0 3px 0 2px;
  border-top: 1px solid #666;
  border-bottom: 1px solid #777;
  background: #f9f9f9;
}

.toolbar button {
  width: 22px;
  height: 24px;
  display: flex;
  align-items: center;
  justify-content: center;
}

.toolbar button svg {
  width: 20px;
  height: 20px;
}

.toolbar .selected {
  width: 24px;
  border: 1px solid #2a8ad8;
}

.sep {
  width: 1px;
  height: 18px;
  background: #ccc;
}

.caret {
  border: 2px solid transparent;
  border-top-color: #111;
  border-bottom: none;
  margin: 0 1px;
}

.zoom {
  position: relative;
  width: 129px;
}

.zoom select {
  appearance: none;
  display: block;
  width: 100%;
  height: 20px;
  padding: 0 2px;
  border: 1px solid #999;
  border-radius: 0;
  background: #fff;
  color: #111;
  font: inherit;
}

.zoom svg {
  position: absolute;
  right: 3px;
  top: 6px;
  width: 8px;
  height: 8px;
}

.display-modes {
  display: flex;
  align-items: center;
  gap: 2px;
  margin-left: auto;
}

.selected + .sep {
  margin: 0 5px;
}

/* canvas */
.canvas {
  position: relative;
  flex: 1;
  min-height: 0;
  overflow: hidden;
  background:
    repeating-linear-gradient(90deg, transparent 0 63px, #585858 63px 64px, transparent 64px 159px),
    repeating-linear-gradient(transparent 0 36px, #585858 36px 37px, transparent 37px 53px),
    #505050;
  font-family: "Open Sans", "Noto Sans", sans-serif;
  font-size: 12px;
}

.area {
  position: absolute;
  background: rgba(198, 198, 198, 0.85);
}

.area-left { left: 0; top: 0; width: 261px; height: 275px; }
.area-red { left: 485px; top: 3px; width: 174px; height: 88px; border-radius: 24px; border: 1px solid #8c2020; background: #b52020; }
.area-main { left: 397px; top: 123px; width: 707px; bottom: 0; border: 1px solid #bbb; border-bottom: none; }
.area-edge { left: 0; top: 306px; width: 4px; height: 58px; background: #b52020; }

.wires {
  position: absolute;
  inset: 0;
  width: 100%;
  height: 100%;
  fill: none;
}

.wire { stroke: rgba(0, 0, 0, 0.65); stroke-width: 3; }
.maroon { stroke: #3a0808; }
.thin { stroke: #888; stroke-width: 1; }
.tree { stroke: #404040; stroke-width: 5; stroke-linecap: round; stroke-dasharray: 9 9.5; }
.tree-core { stroke: #aaa; stroke-width: 2; stroke-linecap: round; stroke-dasharray: 9 9.5; }
.list-core { stroke: #999; stroke-width: 1; }

.canvas h1 {
  position: absolute;
  left: 437px;
  top: 127px;
  margin: 0;
  font: 300 40px/52px Inter, "Open Sans", sans-serif;
  color: #000;
  white-space: nowrap;
}

.node {
  position: absolute;
}

.body {
  position: relative;
  display: flex;
  border: 1px solid #333;
  border-radius: 4px;
  background: linear-gradient(#f4f4f4, #e4e4e4 10px, #c8c8c8);
}

.inputs,
.outputs {
  display: flex;
  flex-direction: column;
  line-height: 16px;
  white-space: nowrap;
}

.inputs {
  text-align: right;
}

.outputs {
  flex: 1;
}

.inputs li,
.outputs li {
  position: relative;
  flex: 1;
  display: flex;
  align-items: center;
}

.inputs li {
  justify-content: flex-end;
}

/* connection grips */
.inputs li::before,
.outputs li::after,
.port-in::before,
.port-out::after {
  content: "";
  position: absolute;
  top: calc(50% - 5px);
  width: 6px;
  height: 11px;
  border: 2px solid #000;
  background: #fff;
}

.inputs li::before,
.port-in::before {
  left: -6px;
  border-right: none;
  border-radius: 6px 0 0 6px;
}

.outputs li::after,
.port-out::after {
  right: -6px;
  border-left: none;
  border-radius: 0 6px 6px 0;
}

.icon {
  align-self: center;
  width: 22px;
  height: 22px;
}

.version {
  margin: 0 6px;
  height: 15px;
  border-radius: 0 0 3px 3px;
  background: #303030;
  color: #eee;
  line-height: 14px;
  text-align: center;
}

.time {
  position: relative;
  margin-top: 2px;
  height: 17px;
  border: 1px solid #222;
  background: linear-gradient(#d0d0d0, #a8a8a8);
  line-height: 15px;
  text-align: center;
}

.time::before {
  content: "";
  position: absolute;
  left: calc(50% - 5px);
  top: -5px;
  border: 5px solid transparent;
  border-top: none;
  border-bottom-color: #ccc;
}

.slow { background: #ea3c10; }
.slow::before { border-bottom-color: #ea3c10; }

.pmv { left: 40px; top: -18px; width: 211px; }
.pmv .body { height: 283px; }
.pmv .inputs { width: 94px; padding: 5px 0 2px; }
.pmv .outputs { padding: 1px 0 2px; }
.pmv .tall { align-self: flex-start; width: 24px; height: 26px; margin: 109px 6px 0; }

.toggle {
  position: absolute;
  left: 517px;
  top: 35px;
  width: 111px;
  height: 23px;
  display: flex;
  justify-content: space-between;
  border: 1px solid #333;
  border-radius: 2px;
  background: linear-gradient(#e8e8e8, #bbb 8px, #a0a0b0);
  line-height: 20px;
  padding-left: 9px;
}

.toggle button {
  width: 51px;
  border: 1px solid #111;
  outline: 1px solid #999;
  outline-offset: -3px;
  background: #444;
  color: #ddd;
  font: 14px/16px "Liberation Mono", monospace;
}

.mesh {
  position: absolute;
  left: 528px;
  top: 214px;
  width: 76px;
  height: 30px;
  display: flex;
  align-items: center;
  justify-content: center;
  gap: 7px;
  padding-right: 4px;
  border: 1px solid #333;
  border-radius: 3px;
  background: linear-gradient(#e4e4e4, #bbb 12px, #9494a8);
}

.percent {
  position: absolute;
  left: 793px;
  top: 274px;
  width: 33px;
  height: 22px;
  padding-left: 7px;
  border: 1px solid #333;
  border-radius: 3px;
  background: #fff;
  font: 12px/17px "Liberation Mono", monospace;
}

.error { left: 881px; top: 196px; width: 200px; }
.error .body {
  height: 131px;
  padding: 1px 0;
  border-color: #500;
  background: linear-gradient(#f08080, #ee8080 7px, #e01616 8px, #cc0000);
}
.error .inputs { width: 91px; }
.error .icon { margin: 0 6px 0 8px; }
.error .version { background: #3c0000; color: #fbb; }

.expand {
  position: absolute;
  left: 3px;
  top: 4px;
  width: 15px;
  height: 15px;
  border: 1px solid #444;
  border-radius: 2px;
  background: #ddd;
}

.expand svg {
  width: 9px;
  height: 9px;
  margin: 0 auto;
}

.balloon {
  position: absolute;
  right: 2px;
  top: -13px;
  width: 14px;
  height: 12px;
}

.panel {
  position: absolute;
  left: 407px;
  top: 423px;
  width: 82px;
  height: 59px;
  border: 1px solid #333;
  border-radius: 4px;
  background: #fff;
}

.panel table {
  width: 100%;
  border-collapse: collapse;
  font: 12px/17px "DejaVu Sans Mono", monospace;
  color: #333;
}

.panel thead {
  background: #d8d8d8;
  line-height: 21px;
}

.panel td,
.panel th {
  padding: 0 3px;
  font-weight: normal;
  text-align: left;
}

.panel td:first-child,
.panel th:first-child {
  width: 17px;
  padding-left: 5px;
  border-right: 1px solid #ccc;
}

.panel th:last-child {
  padding-right: 14px;
  text-align: right;
}

.palette { left: 507px; top: 434px; width: 128px; }
.palette .body { height: 30px; }
.palette .inputs { width: 47px; }
.palette .icon { width: 24px; margin: 0 6px 0 5px; }

.legend { left: 649px; top: 373px; width: 180px; }
.legend .body { height: 170px; padding: 1px 0 19px; background: linear-gradient(#f8f8f8, #e8e8e8 10px, #d0d0d0); }
.legend .inputs { width: 93px; }
.legend .icon { align-self: flex-end; margin: 0 6px 0 8px; }
.legend .outputs { justify-content: flex-end; }
.legend .outputs li { flex: 0 0 21px; }

.explode {
  position: absolute;
  left: 867px;
  top: 498px;
  width: 85px;
  height: 42px;
  display: flex;
  align-items: center;
  gap: 6px;
  padding-left: 4px;
  border: 1px solid #333;
  border-radius: 4px;
  background: linear-gradient(#f4f4f4, #d8d8d8);
}

.explode::after {
  top: 7px;
}

.branch {
  align-self: flex-start;
  line-height: 22px;
}

.stub {
  position: absolute;
  left: 0;
  border: 1px solid #333;
  border-left: none;
}

.stub-value { top: 135px; width: 8px; height: 22px; border-radius: 0 3px 3px 0; background: #fff; }
.stub-bottom { bottom: 0; width: 7px; height: 24px; background: #999; }

.compass {
  position: absolute;
  right: 6px;
  bottom: 2px;
  width: 52px;
  height: 50px;
}

.status {
  height: 20px;
  display: flex;
  align-items: center;
  gap: 2px;
  padding: 2px 31px 0 2px;
  border-top: 1px solid #fff;
  background: #f0f0f0;
}

.status svg {
  width: 16px;
  height: 16px;
}

.build {
  margin-left: auto;
  color: #777;
}

/* taskbar */
.taskbar {
  height: 36px;
  display: flex;
  background: #101010;
  color: #eee;
  font-family: "Open Sans", sans-serif;
}

.apps {
  flex: 1;
  display: flex;
}

.apps button {
  flex: 1;
  display: flex;
  align-items: center;
  justify-content: center;
}

.apps svg {
  width: 22px;
  height: 22px;
}

.apps .open {
  background: linear-gradient(#cbc3f0, #cbc3f0) center bottom / 37px 2px no-repeat;
}

.tray {
  width: 355px;
  display: flex;
  align-items: center;
  padding-left: 11px;
}

.weather {
  display: flex;
  align-items: center;
  gap: 6px;
  width: 78px;
  font-size: 13px;
}

.weather svg {
  width: 24px;
  height: 22px;
}

.tray-icons {
  display: flex;
  gap: 7px;
}

.tray-icons svg {
  width: 14px;
  height: 14px;
}

.lang {
  width: 44px;
  text-align: center;
}

.clock {
  width: 50px;
  display: flex;
  flex-direction: column;
  align-items: center;
  line-height: 16px;
}

.notes {
  margin-left: 15px;
}

.notes svg {
  width: 16px;
  height: 16px;
}
```
